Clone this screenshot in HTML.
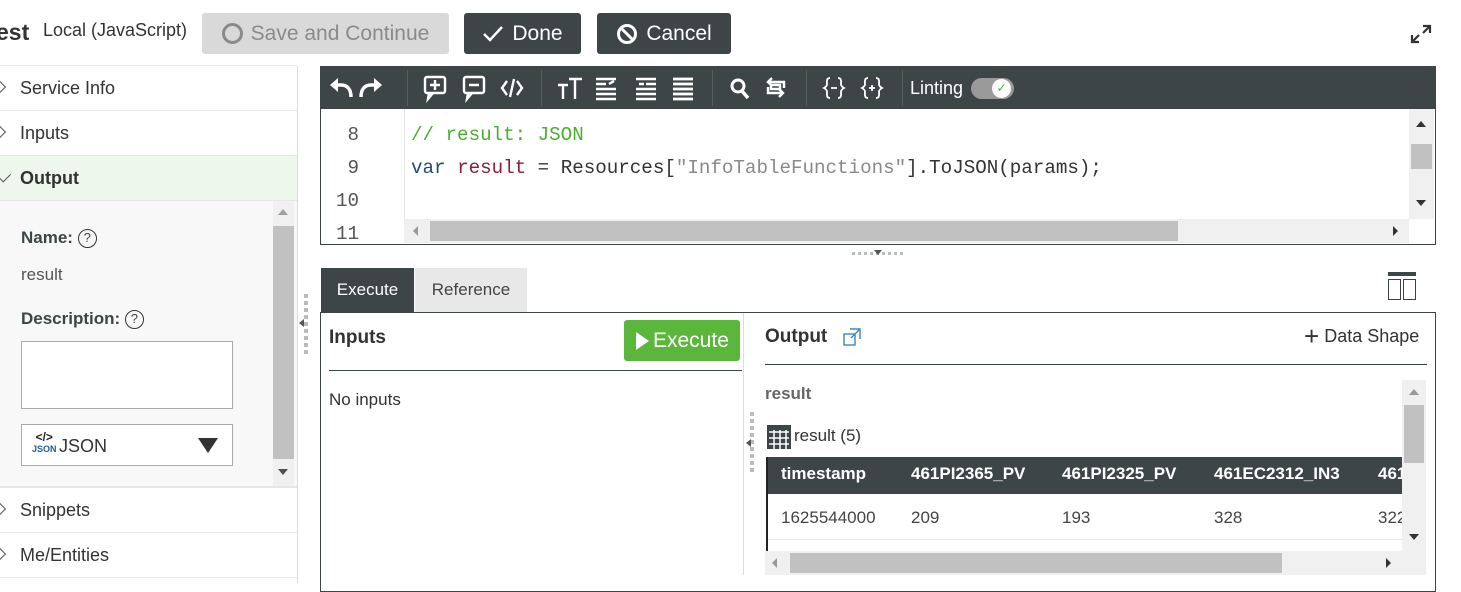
<!DOCTYPE html>
<html><head><meta charset="utf-8"><style>
*{box-sizing:border-box;margin:0;padding:0}
body{width:1461px;height:583px;overflow:hidden;background:#fff;font-family:"Liberation Sans",sans-serif;color:#333;position:relative}
.a{position:absolute}
.btn{position:absolute;top:13px;height:41px;border-radius:3px;color:#fff;font-size:20px;display:flex;align-items:center;justify-content:center;gap:8px}
.row{position:absolute;left:0;width:297px;height:45px;border-bottom:1px solid #e6e6e6;font-size:18px;color:#333;display:flex;align-items:center;padding-left:20px}
.chev{position:absolute;left:-6px;top:16px;width:10px;height:10px;border-top:1px solid #555;border-right:1px solid #555;transform:rotate(45deg)}
.mono{font-family:"Liberation Mono","DejaVu Sans Mono",monospace;font-size:19.2px}
.sep{position:absolute;top:70px;width:1px;height:36px;background:#555d5f}
.th{position:absolute;top:464px;color:#fff;font-weight:bold;font-size:17px}
.td{position:absolute;top:508px;color:#444;font-size:17px}
.q{display:inline-block;width:19px;height:19px;border:1.5px solid #333;border-radius:50%;font-size:13px;font-weight:normal;text-align:center;line-height:16px;vertical-align:1px}
</style></head><body>
<div class="a" style="left:-4px;top:19px;font-size:23px;font-weight:bold;color:#333">est</div>
<div class="a" style="left:43px;top:20px;font-size:18px;color:#333">Local (JavaScript)</div>
<div class="btn" style="left:202px;width:247px;background:#d9d9d9;color:#8a8a8a;font-size:21px"><span style="width:21px;height:21px;border:3px solid #8a8a8a;border-radius:50%;display:inline-block"></span>Save and Continue</div>
<div class="btn" style="left:464px;width:117px;background:#3d4547;font-size:21px"><svg width="22" height="20" viewBox="0 0 22 20"><path d="M2 10l6 6L20 3" stroke="#fff" stroke-width="2.5" fill="none"/></svg>Done</div>
<div class="btn" style="left:597px;width:134px;background:#3d4547;font-size:21px"><svg width="22" height="22" viewBox="0 0 22 22"><circle cx="11" cy="11" r="8.5" stroke="#fff" stroke-width="3" fill="none"/><path d="M5 5l12 12" stroke="#fff" stroke-width="3"/></svg>Cancel</div>
<svg class="a" style="left:1410px;top:24px" width="22" height="20" viewBox="0 0 22 20"><path d="M2 18l7-7M13 2h7v7M20 2l-7 7M2 11v7h7" stroke="#333" stroke-width="2.2" fill="none"/></svg>

<div class="a" style="left:297px;top:66px;width:1px;height:517px;background:#ddd"></div>
<div class="a" style="left:0;top:65px;width:297px;height:1px;background:#e6e6e6"></div>
<div class="row" style="top:66px"><span class="chev"></span>Service Info</div>
<div class="row" style="top:111px"><span class="chev"></span>Inputs</div>
<div class="row" style="top:156px;background:#eef7ec;font-weight:bold"><span class="a" style="left:2px;top:15px;width:6px;height:11px;border-right:1px solid #555;border-bottom:1px solid #555;transform:rotate(45deg)"></span>Output</div>
<div class="a" style="left:0;top:201px;width:297px;height:287px;background:#f8f8f8;border-bottom:2px solid #e6e6e6"></div>
<div class="a" style="left:273px;top:201px;width:21px;height:285px;background:#f0f0f0"></div>
<div class="a" style="left:273px;top:226px;width:21px;height:233px;background:#c1c1c1"></div>
<div class="a" style="left:278px;top:209px;border:5px solid transparent;border-bottom:6px solid #a0a0a0;border-top:0"></div>
<div class="a" style="left:278px;top:469px;border:5px solid transparent;border-top:6px solid #505050;border-bottom:0"></div>
<div class="a" style="left:21px;top:228px;font-size:17px;font-weight:bold;color:#3d4547">Name: <span class="q">?</span></div>
<div class="a" style="left:21px;top:265px;font-size:17px;color:#555">result</div>
<div class="a" style="left:21px;top:309px;font-size:17px;font-weight:bold;color:#3d4547">Description: <span class="q">?</span></div>
<div class="a" style="left:21px;top:341px;width:212px;height:68px;border:1px solid #aaa;background:#fff"></div>
<div class="a" style="left:21px;top:424px;width:212px;height:42px;border:1px solid #aaa;background:#fff"></div>
<div class="a" style="left:32px;top:432px;font-size:12px;font-weight:bold;color:#222;line-height:11px;text-align:center">&lt;/&gt;<br><span style="font-size:9px;color:#1e5fa0">JSON</span></div>
<div class="a" style="left:59px;top:436px;font-size:18px;color:#333">JSON</div>
<div class="a" style="left:198px;top:438px;border:10px solid transparent;border-top:15px solid #333;border-bottom:0"></div>
<div class="row" style="top:488px"><span class="chev"></span>Snippets</div>
<div class="row" style="top:533px"><span class="chev"></span>Me/Entities</div>

<div class="a" style="left:304px;top:294px;width:4px;height:60px;background:repeating-linear-gradient(#bbb 0 4px,transparent 4px 7px)"></div>
<div class="a" style="left:299px;top:319px;border:4px solid transparent;border-right:5px solid #555;border-left:0"></div>

<div class="a" style="left:320px;top:66px;width:1116px;height:179px;border:1px solid #3d4547"></div>
<div class="a" style="left:321px;top:67px;width:1114px;height:42px;background:#3d4547"></div>
<svg class="a" style="left:321px;top:67px" width="600" height="42" viewBox="0 0 600 42" fill="none" stroke="#fff" stroke-width="2.4">
<path d="M12 18h8c6 0 10 4 10 12" stroke-width="3.5"/><path d="M9 18l8-7v14z" fill="#fff" stroke="none"/>
<path d="M58 18h-8c-6 0-10 4-10 12" stroke-width="3.5"/><path d="M61 18l-8-7v14z" fill="#fff" stroke="none"/>
<rect x="104" y="10" width="20" height="16" rx="2"/><path d="M114 13v10M109 18h10M108 26l-1 6 5-6"/>
<rect x="143" y="10" width="20" height="16" rx="2"/><path d="M148 18h10M147 26l-1 6 5-6"/>
<path d="M186 14l-5 7 5 7M196 14l5 7-5 7M193 12l-4 18"/>
<path d="M237 18h10M242 18v14M248 12h13M254 12v20"/>
<path d="M275 12h20M275 17h10M275 22h20M275 27h20M275 32h20M288 17l5-3"/>
<path d="M315 12h20M325 17h10M315 22h20M315 27h20M315 32h20M318 17h5"/>
<path d="M352 12h20M352 17h20M352 22h20M352 27h20M352 32h20" stroke-width="2.8"/>
<circle cx="417" cy="19" r="6" stroke-width="3"/><path d="M421 24l6 7" stroke-width="3.5"/>
<path d="M447 15h16v6M462 26h-15v-6M451 11l-4 4 4 4M458 22l4 4-4 4M450 18h9v4h-9z"/>
<path d="M509 11c-4 0-3 4-3 7-1 2-3 3-3 3 0 0 2 1 3 3 0 3-1 7 3 7M517 11c4 0 3 4 3 7 1 2 3 3 3 3 0 0-2 1-3 3 0 3 1 7-3 7M510 21h6" stroke-width="1.8"/>
<path d="M547 11c-4 0-3 4-3 7-1 2-3 3-3 3 0 0 2 1 3 3 0 3-1 7 3 7M555 11c4 0 3 4 3 7 1 2 3 3 3 3 0 0-2 1-3 3 0 3 1 7-3 7M548 21h6M551 18v6" stroke-width="1.8"/>
</svg>
<div class="sep" style="left:407px"></div><div class="sep" style="left:541px"></div><div class="sep" style="left:712px"></div><div class="sep" style="left:806px"></div><div class="sep" style="left:902px"></div>
<div class="a" style="left:910px;top:78px;color:#fff;font-size:18px">Linting</div>
<div class="a" style="left:971px;top:78px;width:43px;height:21px;border-radius:11px;background:#9a9a9a"></div>
<div class="a" style="left:992px;top:79px;width:19px;height:19px;border-radius:50%;background:#fff;color:#4cae2e;font-size:12px;text-align:center;line-height:19px">✓</div>
<div class="a" style="left:404px;top:109px;width:1px;height:110px;background:#e6e6e6"></div>
<div class="a mono" style="left:345px;top:119px;color:#555;line-height:33px;text-align:right;width:14px">8<br>9</div>
<div class="a mono" style="left:336px;top:185px;color:#555;line-height:33px">10<br>11</div>
<div class="a mono" style="left:411px;top:119px;line-height:33px;white-space:pre"><span style="color:#4cae2e">// result: JSON</span>
<span style="color:#1e4a7a">var</span> <span style="color:#8a1f3a">result</span> = Resources[<span style="color:#8a8a8a">"InfoTableFunctions"</span>].ToJSON(params);</div>
<div class="a" style="left:404px;top:219px;width:1005px;height:24px;background:#f0f0f0"></div>
<div class="a" style="left:430px;top:221px;width:748px;height:20px;background:#c1c1c1"></div>
<div class="a" style="left:413px;top:226px;border:5px solid transparent;border-right:5px solid #999;border-left:0"></div>
<div class="a" style="left:1393px;top:226px;border:5px solid transparent;border-left:5px solid #333;border-right:0"></div>
<div class="a" style="left:1409px;top:109px;width:25px;height:110px;background:#f0f0f0"></div>
<div class="a" style="left:1411px;top:144px;width:21px;height:25px;background:#c1c1c1"></div>
<div class="a" style="left:1416px;top:121px;border:5px solid transparent;border-bottom:6px solid #333;border-top:0"></div>
<div class="a" style="left:1416px;top:200px;border:5px solid transparent;border-top:6px solid #333;border-bottom:0"></div>
<div class="a" style="left:1409px;top:219px;width:25px;height:24px;background:#fff"></div>

<div class="a" style="left:852px;top:252px;width:53px;height:3px;background:repeating-linear-gradient(90deg,#bbb 0 3px,transparent 3px 6px)"></div>
<div class="a" style="left:874px;top:250px;border:4px solid transparent;border-top:5px solid #555;border-bottom:0"></div>

<div class="a" style="left:321px;top:268px;width:93px;height:44px;background:#3d4547;color:#fff;font-size:17px;text-align:center;line-height:44px">Execute</div>
<div class="a" style="left:415px;top:268px;width:112px;height:44px;background:#e8e8e8;color:#444;font-size:17px;text-align:center;line-height:44px">Reference</div>
<div class="a" style="left:1388px;top:272px;width:28px;height:4px;background:#3d4547"></div>
<div class="a" style="left:1388px;top:279px;width:13px;height:21px;border:1.5px solid #3d4547"></div>
<div class="a" style="left:1403px;top:279px;width:13px;height:21px;border:1.5px solid #3d4547"></div>

<div class="a" style="left:320px;top:312px;width:1116px;height:280px;border:1px solid #3d4547"></div>
<div class="a" style="left:743px;top:313px;width:1px;height:262px;background:#ddd"></div>
<div class="a" style="left:329px;top:327px;font-size:19px;font-weight:bold;color:#333">Inputs</div>
<div class="a" style="left:624px;top:320px;width:116px;height:41px;background:#5bb73b;border-radius:3px;color:#fff;font-size:21px;display:flex;align-items:center;padding-left:12px;gap:4px"><span style="border:9px solid transparent;border-left:13px solid #fff;border-right:0"></span>Execute</div>
<div class="a" style="left:329px;top:370px;width:413px;height:1px;background:#3d4547"></div>
<div class="a" style="left:329px;top:390px;font-size:17px;color:#333">No inputs</div>

<div class="a" style="left:750px;top:412px;width:4px;height:60px;background:repeating-linear-gradient(#bbb 0 4px,transparent 4px 7px)"></div>
<div class="a" style="left:746px;top:439px;border:4px solid transparent;border-right:5px solid #555;border-left:0"></div>

<div class="a" style="left:765px;top:326px;font-size:19px;font-weight:bold;color:#333">Output</div>
<svg class="a" style="left:843px;top:328px" width="18" height="18" viewBox="0 0 18 18" fill="none" stroke="#3a86c8" stroke-width="1.4"><rect x="1" y="6" width="11" height="11"/><path d="M7 1h10v10M17 1L8 10"/></svg>
<div class="a" style="left:1304px;top:326px;font-size:18px;color:#333"><span style="font-size:26px;line-height:20px;vertical-align:-3px">+</span> Data Shape</div>
<div class="a" style="left:765px;top:364px;width:662px;height:1px;background:#3d4547"></div>
<div class="a" style="left:765px;top:384px;font-size:17px;font-weight:bold;color:#666">result</div>
<svg class="a" style="left:767px;top:425px" width="24" height="24" viewBox="0 0 24 24"><rect x="0" y="0" width="24" height="24" fill="#3d4547"/><path d="M2 7h20M2 13h20M2 19h20M7 5v19M13 5v19M19 5v19" stroke="#fff" stroke-width="1.5"/></svg>
<div class="a" style="left:794px;top:426px;font-size:17px;color:#333">result (5)</div>
<div class="a" style="left:766px;top:457px;width:636px;height:37px;background:#3d4547;border-left:2px solid #222"></div>
<div class="th" style="left:781px">timestamp</div><div class="th" style="left:911px">461PI2365_PV</div><div class="th" style="left:1062px">461PI2325_PV</div><div class="th" style="left:1214px">461EC2312_IN3</div><div class="th" style="left:1378px">461</div>
<div class="td" style="left:781px">1625544000</div><div class="td" style="left:911px">209</div><div class="td" style="left:1062px">193</div><div class="td" style="left:1214px">328</div><div class="td" style="left:1378px">322</div>
<div class="a" style="left:766px;top:494px;width:2px;height:58px;background:#222"></div>
<div class="a" style="left:768px;top:539px;width:634px;height:1px;background:#e6e6e6"></div>
<div class="a" style="left:1402px;top:380px;width:24px;height:195px;background:#f0f0f0"></div>
<div class="a" style="left:1404px;top:405px;width:20px;height:58px;background:#c1c1c1"></div>
<div class="a" style="left:1409px;top:389px;border:5px solid transparent;border-bottom:6px solid #999;border-top:0"></div>
<div class="a" style="left:1409px;top:534px;border:5px solid transparent;border-top:6px solid #333;border-bottom:0"></div>
<div class="a" style="left:765px;top:551px;width:637px;height:24px;background:#f0f0f0"></div>
<div class="a" style="left:790px;top:553px;width:492px;height:20px;background:#c1c1c1"></div>
<div class="a" style="left:772px;top:558px;border:5px solid transparent;border-right:5px solid #999;border-left:0"></div>
<div class="a" style="left:1386px;top:558px;border:5px solid transparent;border-left:5px solid #333;border-right:0"></div>
</body></html>
